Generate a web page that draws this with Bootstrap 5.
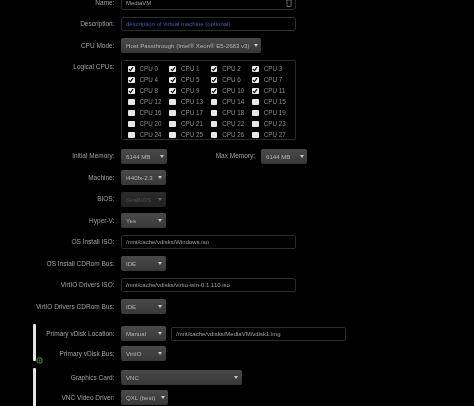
<!DOCTYPE html>
<html lang="en"><head><meta charset="utf-8"><title>VM settings</title>
<link href="https://cdn.jsdelivr.net/npm/bootstrap@5.3.0/dist/css/bootstrap.min.css" rel="stylesheet">
<style>
html,body{height:406px;overflow:hidden;background:#000}
body{font-family:"Liberation Sans",Arial,sans-serif;font-size:7px;color:#8f8f8f}
.vm-form{margin-top:-8px;filter:blur(.4px)}
.vm-row{height:21.5px}
.vm-label{flex:0 0 114.5px;text-align:right;font-size:6.5px;color:#a0a0a0;margin-right:6.5px;white-space:nowrap}
.vm-text{display:block;height:14px;width:175px;padding:0 4px;background:#000;border:1px solid #2c2c2c;border-radius:2px;color:#a0a0a0;font-size:6px;outline:0}
.vm-text.vm-hint{color:#4658b8}
.vm-sel{appearance:none;height:15px;padding:0 8px 0 5px;border:0;border-radius:2px;color:#b4b4b4;font-size:6.1px;font-family:inherit;background:url("data:image/svg+xml,%3Csvg xmlns='http://www.w3.org/2000/svg' width='4' height='3'%3E%3Cpath d='M0 0h4L2 3z' fill='%23c8c8c8'/%3E%3C/svg%3E") no-repeat right 3.5px center,linear-gradient(#494949,#383838)}
.vm-sel:disabled{color:#4c4c4c;opacity:1;background:url("data:image/svg+xml,%3Csvg xmlns='http://www.w3.org/2000/svg' width='4' height='3'%3E%3Cpath d='M0 0h4L2 3z' fill='%23666'/%3E%3C/svg%3E") no-repeat right 3.5px center,linear-gradient(#2b2b2b,#222)}
.w-a{width:46px}.w-b{width:44.5px}.w-c{width:47px}.w-d{width:140px}.w-e{width:120.5px}
.vm-block{height:79.5px;margin-top:3.5px;margin-bottom:6px}
.vm-block .vm-label{padding-top:2px}
.vm-cpus{width:175px;height:80px;padding:2.5px 0 0 6px;border:1px solid #2c2c2c;border-radius:2px;display:grid;grid-template-columns:repeat(4,41.4px);grid-auto-rows:11px;align-items:center}
.vm-cpu{display:flex;align-items:center;font-size:6.3px;color:#8a8a8a;white-space:nowrap;margin:0}
.vm-cpu input{appearance:none;flex:none;width:6.5px;height:6.5px;margin:0 5px 0 0;background:#e8e8e8;border-radius:1px}
.vm-cpu input:checked{background:#eee url("data:image/svg+xml,%3Csvg xmlns='http://www.w3.org/2000/svg' viewBox='0 0 8 8'%3E%3Cpath d='M1.3 4.2l2 2 3.4-4.6' fill='none' stroke='%23111' stroke-width='1.7'/%3E%3C/svg%3E") center/contain no-repeat}
.vm-group{position:relative}
.vm-bar{position:absolute;left:32.5px;top:0;width:3px;background:#e6e6e6;border-radius:1px}
.vm-plus{position:absolute;left:36px;bottom:0;width:7px;height:7px}
.vm-r1{height:20px}
.vm-del{position:absolute;right:4px;top:3px}
.vm-gap1{margin-top:6px}.vm-gap2{margin-top:4px}
.vm-ml{flex-basis:88px;margin-right:6px}
.vm-disk{margin-left:5.5px}
</style></head><body>
<form class="vm-form">
<div class="vm-row d-flex align-items-center"><label class="vm-label">Name:</label><div class="position-relative"><input class="vm-text" value="MediaVM"><svg class="vm-del" width="6" height="8" viewBox="0 0 6 8"><path d="M.5 1h5M1 1v6.5h4V1M2.3 1V.3h1.4V1" fill="none" stroke="#888" stroke-width=".7"/></svg></div></div>
<div class="vm-row d-flex align-items-center"><label class="vm-label">Description:</label><input class="vm-text vm-hint" value="description of virtual machine (optional)"></div>
<div class="vm-row d-flex align-items-center"><label class="vm-label">CPU Mode:</label><select class="vm-sel w-d"><option>Host Passthrough (Intel® Xeon® E5-2683 v3)</option></select></div>
<div class="vm-block d-flex"><label class="vm-label">Logical CPUs:</label>
<div class="vm-cpus">
<label class="vm-cpu"><input type="checkbox" checked>CPU 0</label><label class="vm-cpu"><input type="checkbox" checked>CPU 1</label><label class="vm-cpu"><input type="checkbox" checked>CPU 2</label><label class="vm-cpu"><input type="checkbox" checked>CPU 3</label>
<label class="vm-cpu"><input type="checkbox" checked>CPU 4</label><label class="vm-cpu"><input type="checkbox" checked>CPU 5</label><label class="vm-cpu"><input type="checkbox" checked>CPU 6</label><label class="vm-cpu"><input type="checkbox" checked>CPU 7</label>
<label class="vm-cpu"><input type="checkbox" checked>CPU 8</label><label class="vm-cpu"><input type="checkbox" checked>CPU 9</label><label class="vm-cpu"><input type="checkbox" checked>CPU 10</label><label class="vm-cpu"><input type="checkbox" checked>CPU 11</label>
<label class="vm-cpu"><input type="checkbox">CPU 12</label><label class="vm-cpu"><input type="checkbox">CPU 13</label><label class="vm-cpu"><input type="checkbox">CPU 14</label><label class="vm-cpu"><input type="checkbox">CPU 15</label>
<label class="vm-cpu"><input type="checkbox">CPU 16</label><label class="vm-cpu"><input type="checkbox">CPU 17</label><label class="vm-cpu"><input type="checkbox">CPU 18</label><label class="vm-cpu"><input type="checkbox">CPU 19</label>
<label class="vm-cpu"><input type="checkbox">CPU 20</label><label class="vm-cpu"><input type="checkbox">CPU 21</label><label class="vm-cpu"><input type="checkbox">CPU 22</label><label class="vm-cpu"><input type="checkbox">CPU 23</label>
<label class="vm-cpu"><input type="checkbox">CPU 24</label><label class="vm-cpu"><input type="checkbox">CPU 25</label><label class="vm-cpu"><input type="checkbox">CPU 26</label><label class="vm-cpu"><input type="checkbox">CPU 27</label>
</div></div>
<div class="vm-row d-flex align-items-center"><label class="vm-label">Initial Memory:</label><select class="vm-sel w-a"><option>6144 MB</option></select><label class="vm-label vm-ml">Max Memory:</label><select class="vm-sel w-a"><option>6144 MB</option></select></div>
<div class="vm-row d-flex align-items-center"><label class="vm-label">Machine:</label><select class="vm-sel w-b"><option>i440fx-2.3</option></select></div>
<div class="vm-row d-flex align-items-center"><label class="vm-label">BIOS:</label><select class="vm-sel w-b" disabled><option>SeaBIOS</option></select></div>
<div class="vm-row d-flex align-items-center"><label class="vm-label">Hyper-V:</label><select class="vm-sel w-b"><option>Yes</option></select></div>
<div class="vm-row d-flex align-items-center"><label class="vm-label">OS Install ISO:</label><input class="vm-text" value="/mnt/cache/vdisks/Windows.iso"></div>
<div class="vm-row d-flex align-items-center"><label class="vm-label">OS Install CDRom Bus:</label><select class="vm-sel w-b"><option>IDE</option></select></div>
<div class="vm-row d-flex align-items-center"><label class="vm-label">VirtIO Drivers ISO:</label><input class="vm-text" value="/mnt/cache/vdisks/virtio-win-0.1.110.iso"></div>
<div class="vm-row d-flex align-items-center"><label class="vm-label">VirtIO Drivers CDRom Bus:</label><select class="vm-sel w-b"><option>IDE</option></select></div>
<div class="vm-group vm-gap1">
<span class="vm-bar" style="height:37px"></span>
<svg class="vm-plus" viewBox="0 0 8 8"><circle cx="4" cy="4" r="3" fill="none" stroke="#3f7a2a" stroke-width="1.3"/><path d="M4 2.5v3M2.5 4h3" stroke="#3f7a2a" stroke-width=".8"/></svg>
<div class="vm-r1 d-flex align-items-center"><label class="vm-label">Primary vDisk Location:</label><select class="vm-sel w-b"><option>Manual</option></select><input class="vm-text vm-disk" value="/mnt/cache/vdisks/MediaVM/vdisk1.img"></div>
<div class="vm-r1 d-flex align-items-center"><label class="vm-label">Primary vDisk Bus:</label><select class="vm-sel w-b"><option>VirtIO</option></select></div>
</div>
<div class="vm-group vm-gap2">
<span class="vm-bar" style="height:40px"></span>
<div class="vm-r1 d-flex align-items-center"><label class="vm-label">Graphics Card:</label><select class="vm-sel w-e"><option>VNC</option></select></div>
<div class="vm-r1 d-flex align-items-center"><label class="vm-label">VNC Video Driver:</label><select class="vm-sel w-c"><option>QXL (best)</option></select></div>
</div>
</form>
<script src="https://cdn.jsdelivr.net/npm/bootstrap@5.3.0/dist/js/bootstrap.bundle.min.js"></script>
</body></html>
